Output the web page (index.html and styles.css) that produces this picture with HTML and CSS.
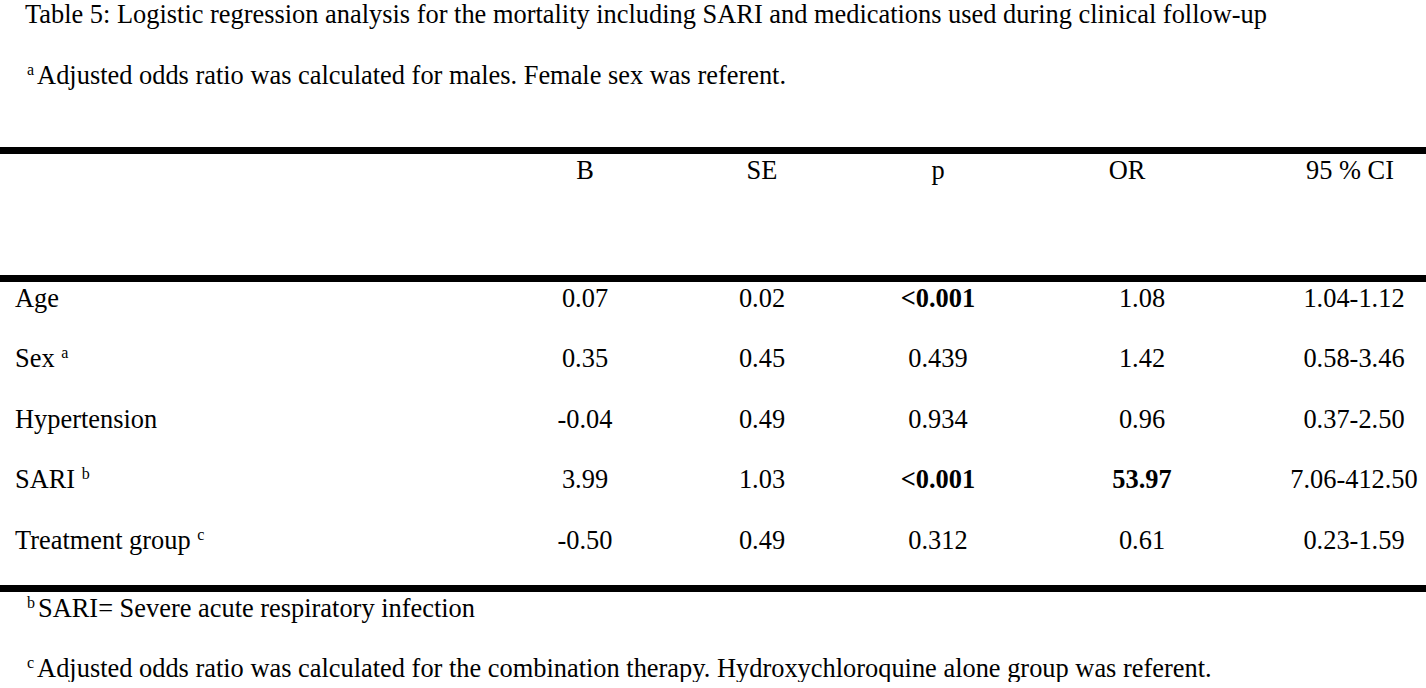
FILE: index.html
```html
<!DOCTYPE html>
<html lang="en">
<head>
<meta charset="utf-8">
<title>Table 5</title>
<link rel="stylesheet" href="styles.css">
</head>
<body>
<p class="caption">Table 5: Logistic regression analysis for the mortality including SARI and medications used during clinical follow-up</p>
<p class="note note-a"><sup class="fn">a</sup>Adjusted odds ratio was calculated for males. Female sex was referent.</p>

<div class="table" role="table">
  <div class="row head" role="row">
    <div class="cell label" role="columnheader"></div>
    <div class="cell" role="columnheader">B</div>
    <div class="cell" role="columnheader">SE</div>
    <div class="cell" role="columnheader">p</div>
    <div class="cell or-head" role="columnheader">OR</div>
    <div class="cell ci-head" role="columnheader">95 % CI</div>
  </div>
  <div class="body">
    <div class="row" role="row">
      <div class="cell label">Age</div>
      <div class="cell">0.07</div>
      <div class="cell">0.02</div>
      <div class="cell bold">&lt;0.001</div>
      <div class="cell">1.08</div>
      <div class="cell ci">1.04-1.12</div>
    </div>
    <div class="row" role="row">
      <div class="cell label">Sex <sup class="rs">a</sup></div>
      <div class="cell">0.35</div>
      <div class="cell">0.45</div>
      <div class="cell">0.439</div>
      <div class="cell">1.42</div>
      <div class="cell ci">0.58-3.46</div>
    </div>
    <div class="row" role="row">
      <div class="cell label">Hypertension</div>
      <div class="cell">-0.04</div>
      <div class="cell">0.49</div>
      <div class="cell">0.934</div>
      <div class="cell">0.96</div>
      <div class="cell ci">0.37-2.50</div>
    </div>
    <div class="row" role="row">
      <div class="cell label">SARI <sup class="rs">b</sup></div>
      <div class="cell">3.99</div>
      <div class="cell">1.03</div>
      <div class="cell bold">&lt;0.001</div>
      <div class="cell bold">53.97</div>
      <div class="cell ci">7.06-412.50</div>
    </div>
    <div class="row" role="row">
      <div class="cell label">Treatment group <sup class="rs">c</sup></div>
      <div class="cell">-0.50</div>
      <div class="cell">0.49</div>
      <div class="cell">0.312</div>
      <div class="cell">0.61</div>
      <div class="cell ci">0.23-1.59</div>
    </div>
  </div>
</div>

<p class="note note-b"><sup class="fn">b</sup>SARI= Severe acute respiratory infection</p>
<p class="note note-c"><sup class="fn">c</sup>Adjusted odds ratio was calculated for the combination therapy. Hydroxychloroquine alone group was referent.</p>
</body>
</html>
```

FILE: styles.css
```css
html, body {
  margin: 0;
  padding: 0;
  background: #ffffff;
}

body {
  font-family: "Liberation Serif", "Times New Roman", Times, serif;
  font-size: 26.4px;
  line-height: 28px;
  color: #000000;
  width: 1426px;
  overflow: hidden;
}

p {
  margin: 0;
}

.caption {
  padding-left: 25px;
  white-space: nowrap;
}

.note {
  padding-left: 27px;
  white-space: nowrap;
}

.note-a {
  margin-top: 32.5px;
}

.note-b {
  margin-top: 2.5px;
}

.note-c {
  margin-top: 31.5px;
}

sup {
  line-height: 0;
}

.fn {
  font-size: 16px;
  vertical-align: 9px;
  margin-right: 3px;
}

.rs {
  font-size: 16px;
  vertical-align: 9px;
}

.table {
  margin-top: 58.5px;
  border-top: 7px solid #000;
  border-bottom: 7px solid #000;
}

.row {
  display: grid;
  grid-template-columns: 496px 178px 176px 176px 232px 168px;
  height: 60.6px;
  box-sizing: border-box;
  padding-top: 1.5px;
}

.row.head {
  height: 121px;
  padding-top: 2.2px;
}

.body {
  border-top: 7px solid #000;
}

.cell {
  text-align: center;
  white-space: nowrap;
}

.cell.label {
  text-align: left;
  padding-left: 15px;
}

.bold {
  font-weight: bold;
}

.or-head {
  padding-right: 30px;
}

.ci-head {
  padding-left: 16px;
}

.ci {
  padding-left: 24px;
}
```
